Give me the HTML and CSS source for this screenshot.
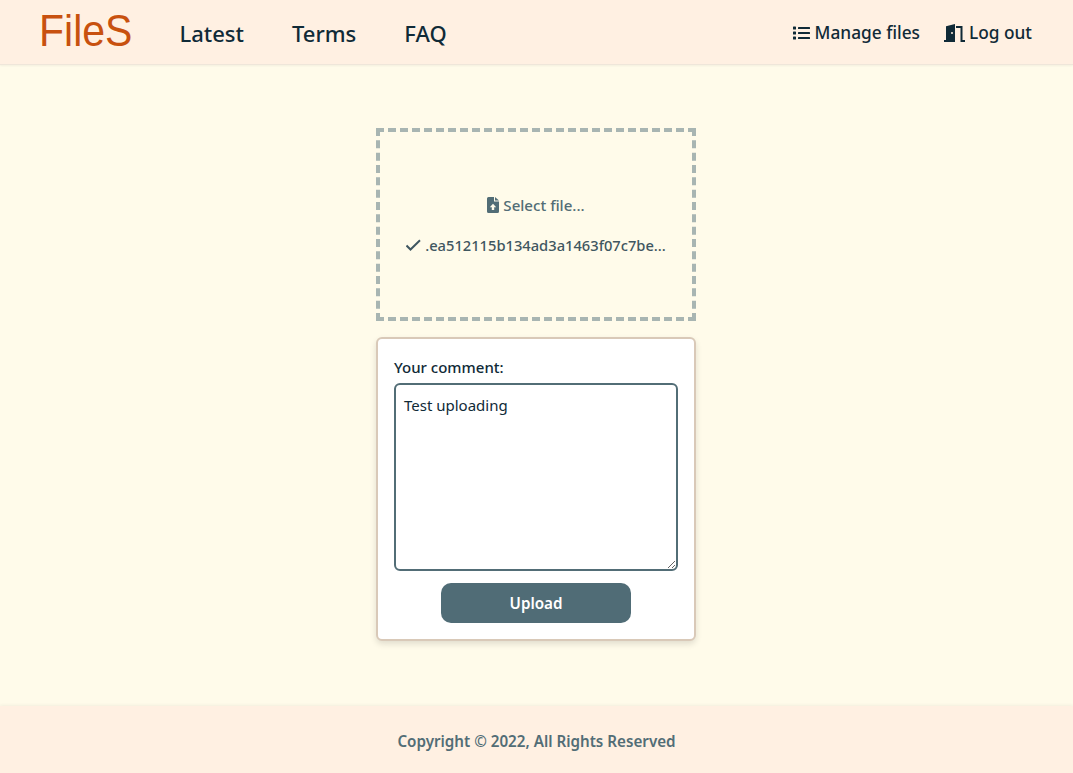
FILE: index.html
```html
<!DOCTYPE html>
<html lang="en">
<head>
    <meta charset="UTF-8">
    <meta name="viewport" content="width=device-width, initial-scale=1.0">
    <title>FileS</title>
    <link rel="stylesheet" href="styles.css">
</head>
<body>

    <header class="navbar">
        <a class="logo" href="#">FileS</a>
        <nav class="main-nav">
            <a href="#">Latest</a>
            <a href="#">Terms</a>
            <a href="#">FAQ</a>
        </nav>
        <nav class="user-nav">
            <a href="#">
                <svg class="icon" width="17" height="14" viewBox="0 0 17 14" fill="currentColor">
                    <rect x="0" y="0.5" width="3" height="3" rx="0.6"/>
                    <rect x="0" y="5.5" width="3" height="3" rx="0.6"/>
                    <rect x="0" y="10.5" width="3" height="3" rx="0.6"/>
                    <rect x="5" y="1" width="12" height="2" rx="0.5"/>
                    <rect x="5" y="6" width="12" height="2" rx="0.5"/>
                    <rect x="5" y="11" width="12" height="2" rx="0.5"/>
                </svg>
                Manage files
            </a>
            <a href="#">
                <svg class="icon" width="21" height="18" viewBox="0 0 21 18" fill="currentColor">
                    <path d="M0 16h2V2.200L11 0v18H0z"/>
                    <circle cx="8" cy="9" r="1" fill="#fff0e2"/>
                    <path d="M12 2h6.500v14H21v2h-4.500V4H12z"/>
                </svg>
                Log out
            </a>
        </nav>
    </header>

    <main class="content">
        <div class="dropzone">
            <div class="select-file">
                <svg class="icon" width="12" height="16" viewBox="0 0 12 16" fill="currentColor">
                    <path d="M1.500 0H7v4.500h5v10a1.500 1.500 0 0 1-1.500 1.500h-9A1.500 1.500 0 0 1 0 14.500v-13A1.500 1.500 0 0 1 1.500 0z"/>
                    <path d="M8 0l4 3.500H8z"/>
                    <path d="M6 6.800l3.200 3.400H7.200V13H4.800v-2.800H2.800z" fill="#fffbea"/>
                </svg>
                Select file...
            </div>
            <div class="file-name">
                <svg class="icon" width="15" height="12" viewBox="0 0 15 12" fill="none" stroke="currentColor" stroke-width="2">
                    <path d="M0.500 6.500l4 4L14 1.200"/>
                </svg>
                .ea512115b134ad3a1463f07c7be...
            </div>
        </div>

        <form class="upload-card">
            <label for="comment">Your comment:</label>
            <textarea id="comment">Test uploading</textarea>
            <button type="button">Upload</button>
        </form>
    </main>

    <footer class="footer">Copyright © 2022, All Rights Reserved</footer>

</body>
</html>
```

FILE: styles.css
```css
* {
    box-sizing: border-box;
}

body {
    margin: 0;
    height: 773px;
    display: flex;
    flex-direction: column;
    font-family: "Noto Sans", "Open Sans", sans-serif;
    background-color: #fffbea;
    color: #102a37;
    overflow: hidden;
}

a {
    color: inherit;
    text-decoration: none;
}

.navbar {
    height: 65px;
    padding: 1px 41px 0 39px;
    display: flex;
    align-items: center;
    background-color: #fff0e2;
    border-bottom: 1px solid #efe6da;
    box-shadow: 0 1px 2px rgba(0, 0, 0, 0.05);
}

.logo {
    display: inline-block;
    margin-top: -2px;
    font-family: "Liberation Sans", Arial, sans-serif;
    font-size: 41px;
    line-height: 1;
    color: #c8510f;
    transform: scaleY(1.06);
}

.main-nav {
    display: flex;
    gap: 48px;
    margin-left: 47px;
    font-size: 22px;
    font-weight: 500;
}

.user-nav {
    display: flex;
    gap: 24px;
    margin-left: auto;
    font-size: 17.3px;
    font-weight: 500;
}

.user-nav a {
    display: flex;
    align-items: center;
    gap: 5px;
}

.user-nav a + a {
    gap: 4px;
}

.content {
    flex: 1;
    padding: 63px 1px 0 0;
    display: flex;
    flex-direction: column;
    align-items: center;
    gap: 16px;
}

.dropzone {
    width: 320px;
    height: 193px;
    border: 4px dashed #a8b5b2;
    display: flex;
    flex-direction: column;
    align-items: center;
    justify-content: center;
    gap: 18px;
    font-size: 15.1px;
    font-weight: 500;
    color: #526d76;
}

.select-file {
    display: flex;
    align-items: center;
    gap: 4px;
    line-height: 22px;
}

.file-name {
    display: flex;
    align-items: center;
    gap: 4px;
    line-height: 22px;
    font-size: 14.7px;
    color: #3f5660;
}

.upload-card {
    width: 320px;
    height: 304px;
    padding: 17px 16px 16px;
    display: flex;
    flex-direction: column;
    background-color: #fff;
    border: 2px solid #d9c9b8;
    border-radius: 6px;
    box-shadow: 0 3px 6px rgba(0, 0, 0, 0.12);
}

.upload-card label {
    font-size: 15px;
    font-weight: 500;
    line-height: 22px;
    margin-bottom: 5px;
}

.upload-card textarea {
    width: 284px;
    height: 188px;
    padding: 9px 8px;
    font-family: inherit;
    font-size: 15px;
    line-height: 22px;
    color: #102a37;
    border: 2px solid #526d76;
    border-radius: 6px;
    outline: none;
}

.upload-card button {
    width: 190px;
    height: 40px;
    margin: 12px auto 0;
    font-family: inherit;
    font-size: 15.2px;
    font-weight: 600;
    color: #fff;
    background-color: #506c76;
    border: none;
    border-radius: 10px;
}

.footer {
    height: 67px;
    padding-top: 2px;
    display: flex;
    align-items: center;
    justify-content: center;
    font-size: 15.2px;
    font-weight: 600;
    color: #526d76;
    background-color: #fff0e2;
    box-shadow: 0 -1px 3px rgba(0, 0, 0, 0.05);
}
```
